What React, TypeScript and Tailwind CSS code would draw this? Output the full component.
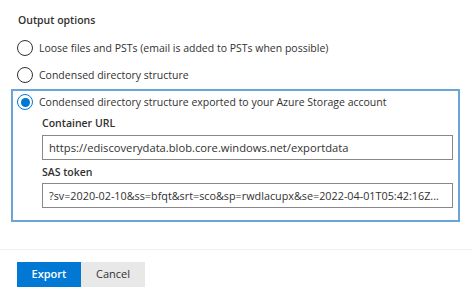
import React from "react";

function Radio({ checked }: { checked?: boolean }) {
  return checked ? (
    <span className="flex h-[16px] w-[16px] shrink-0 items-center justify-center rounded-full border border-[#0078d4] bg-white">
      <span className="h-[9px] w-[9px] rounded-full bg-[#0078d4]" />
    </span>
  ) : (
    <span className="h-[16px] w-[16px] shrink-0 rounded-full border border-[#323130] bg-white" />
  );
}

export default function App() {
  return (
    <div
      className="relative h-[302px] w-[474px] overflow-hidden bg-white text-[10.5px] text-[#323130]"
      style={{ fontFamily: '"Open Sans", "Noto Sans", sans-serif' }}
    >
      <div className="flex flex-col">
        <div className="ml-[18px] mt-[11px] h-[18px] text-[10.5px] font-semibold leading-[18px]">Output options</div>
        <div className="ml-[17px] mt-[6px] flex h-[26px] items-center gap-[6px]">
          <Radio />
          <span className="leading-[18px]">Loose files and PSTs (email is added to PSTs when possible)</span>
        </div>
        <div className="ml-[17px] flex h-[28px] items-center gap-[6px]">
          <Radio />
          <span className="leading-[18px]">Condensed directory structure</span>
        </div>
        <div className="ml-[11px] flex w-[449px] flex-col border-2 border-[#6aa4d9] pb-[12px]">
          <div className="ml-[4px] flex h-[22px] items-center gap-[6px]">
            <Radio checked />
            <span className="leading-[18px]">Condensed directory structure exported to your Azure Storage account</span>
          </div>
          <div className="ml-[29px] mt-[1px] h-[18px] font-semibold leading-[18px]">Container URL</div>
          <div className="ml-[29px] mt-[3px] flex h-[25px] w-[411px] items-center border border-[#8a8886] pl-[6px] pr-[4px] text-[11.2px]">
            <span className="whitespace-nowrap leading-[18px]">https://ediscoverydata.blob.core.windows.net/exportdata</span>
          </div>
          <div className="ml-[29px] mt-[3px] h-[18px] font-semibold leading-[18px]">SAS token</div>
          <div className="ml-[29px] mt-[2px] flex h-[25px] w-[411px] items-center overflow-hidden border border-[#8a8886] pl-[6px] pr-[2px] text-[10.8px]">
            <span className="whitespace-nowrap leading-[18px]">
              ?sv=2020-02-10&amp;ss=bfqt&amp;srt=sco&amp;sp=rwdlacupx&amp;se=2022-04-01T05:42:16Z...
            </span>
          </div>
        </div>
        <div className="mt-[27px] h-[1px] w-[472px] bg-[#f0f0f0]" />
        <div className="ml-[17px] mt-[12px] flex text-[11px]">
          <button className="flex h-[25px] w-[64px] items-center justify-center bg-[#0078d4] font-semibold text-white">
            Export
          </button>
          <button className="flex h-[25px] w-[64px] items-center justify-center bg-[#e8e8e8] text-[#323130]">
            Cancel
          </button>
        </div>
      </div>
    </div>
  );
}
